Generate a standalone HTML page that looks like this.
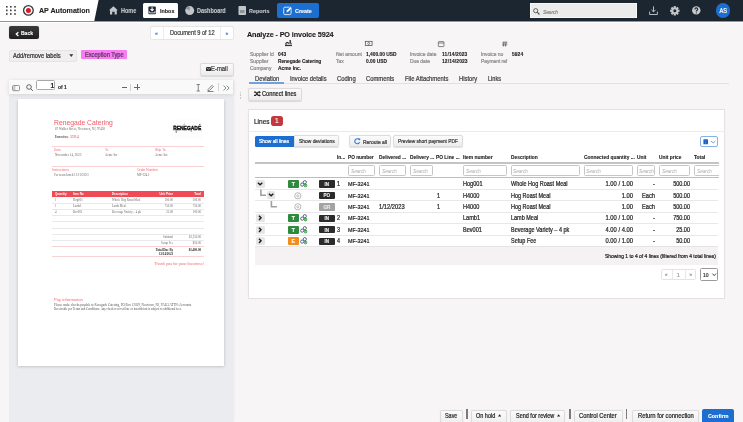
<!DOCTYPE html>
<html><head><meta charset="utf-8">
<style>
*{box-sizing:border-box;margin:0;padding:0}
html,body{width:743px;height:422px;overflow:hidden;background:#f7f5f6;font-family:"Liberation Sans",sans-serif;color:#262626}
.a{position:absolute}
.t{position:absolute;white-space:nowrap;line-height:10px;height:10px;will-change:transform;-webkit-text-stroke-width:0.2px;transform:scaleY(1.15);transform-origin:0 7px}
.t.b{-webkit-text-stroke-width:0.1px}
.t.p{-webkit-text-stroke-width:0}
.t.n,.t.p{transform:none}
.b{font-weight:bold}
svg{position:absolute;overflow:visible}
.btn{position:absolute;background:linear-gradient(#fbfbfb,#ececec);border:1px solid #dcdcdc;border-radius:2px;box-shadow:0 0.5px 1px rgba(0,0,0,.12)}
.inp{position:absolute;border:1px solid #c6c6c6;background:#fff;border-radius:1.5px}
.inp span{position:absolute;will-change:transform;white-space:nowrap;left:1.8px;top:1.2px;line-height:8px;font-size:5px;letter-spacing:-0.2px;font-style:italic;color:#b0b0b0}
</style></head><body>

<!-- HEADER -->
<div class="a" style="left:0;top:0;width:743px;height:21px;background:#1c2631"></div>
<svg style="left:0;top:0" width="100" height="21"><polygon points="0,0 98.6,0 94.3,21 0,21" fill="#fff"/></svg>
<div class="a" style="left:0;top:21px;width:743px;height:1px;background:#8f959b"></div>
<div class="a" style="left:0;top:22px;width:743px;height:1px;background:#fff"></div>

<!-- grid icon -->
<svg style="left:0;top:0" width="20" height="20">
<g fill="#3a3a3a">
<rect x="6" y="6" width="1.6" height="1.6"/><rect x="10" y="6" width="1.6" height="1.6"/><rect x="14.2" y="6" width="1.6" height="1.6"/>
<rect x="6" y="9.6" width="1.6" height="1.6"/><rect x="10" y="9.6" width="1.6" height="1.6"/><rect x="14.2" y="9.6" width="1.6" height="1.6"/>
<rect x="6" y="13.2" width="1.6" height="1.6"/><rect x="10" y="13.2" width="1.6" height="1.6"/><rect x="14.2" y="13.2" width="1.6" height="1.6"/>
</g></svg>
<svg style="left:0;top:0" width="40" height="20"><circle cx="28.4" cy="10.4" r="4.8" fill="none" stroke="#2c3540" stroke-width="1.3"/><circle cx="28.4" cy="10.4" r="2.5" fill="#e3161b"/></svg>
<div class="t n b" style="left:39px;top:5.5px;font-size:7.1px;color:#222">AP Automation</div>

<!-- nav -->
<svg style="left:109px;top:6px" width="10" height="9"><path d="M4.4,0.2 L8.8,4.2 L7.8,4.2 L7.8,8.6 L5.6,8.6 L5.6,5.8 L3.2,5.8 L3.2,8.6 L1,8.6 L1,4.2 L0,4.2 Z" fill="#c3c6c9"/></svg>
<div class="t b" style="left:120.7px;top:5.5px;font-size:5.5px;color:#c5c8cb">Home</div>

<div class="a" style="left:143px;top:3px;width:35px;height:15px;background:#fff;border-radius:1.5px"></div>
<svg style="left:148px;top:6px" width="9" height="9"><rect x="0.4" y="0.4" width="7.4" height="7.8" fill="#1e2630" rx="0.6"/><path d="M4.1,1.2 V4.6 M2.5,3.2 L4.1,4.8 L5.7,3.2" stroke="#fff" stroke-width="1.1" fill="none"/><path d="M1.3,5.2 V6.9 H6.9 V5.2" stroke="#fff" stroke-width="0.8" fill="none"/></svg>
<div class="t b" style="left:159.7px;top:5.5px;font-size:5.4px;color:#262626">Inbox</div>

<svg style="left:185px;top:6px" width="10" height="10"><circle cx="4.7" cy="4.6" r="4.5" fill="#c3c6c9"/><path d="M4.7,4.6 L4.7,0.2 A4.4,4.4 0 0 0 0.8,2.5 Z" fill="#8d9297"/></svg>
<div class="t b" style="left:197px;top:5.5px;font-size:5.5px;color:#c5c8cb">Dashboard</div>

<svg style="left:238px;top:6px" width="9" height="10"><rect x="0.5" y="0" width="7.5" height="9" rx="0.8" fill="#c3c6c9"/><rect x="2" y="4" width="4.5" height="3" fill="#8d9297"/></svg>
<div class="t b" style="left:249px;top:5.5px;font-size:5.42px;color:#c5c8cb">Reports</div>

<div class="a" style="left:277px;top:3.4px;width:42.2px;height:14.2px;background:#1c6fd1;border-radius:2px"></div>
<svg style="left:283px;top:6px" width="10" height="10"><rect x="0.7" y="1.2" width="7.4" height="7.4" rx="1.2" fill="none" stroke="#e8f0fb" stroke-width="0.9"/><path d="M3.2,6.4 L3.5,4.6 L7.4,0.7 L9,2.3 L5.1,6.2 Z" fill="#fff" stroke="#1c6fd1" stroke-width="0.6"/></svg>
<div class="t b" style="left:294.7px;top:5.5px;font-size:5.43px;color:#fff">Create</div>

<div class="a" style="left:530px;top:3px;width:107px;height:14.5px;background:#ebebeb;border:1px solid #f8f8f8"></div>
<svg style="left:533px;top:7.5px" width="8" height="8"><circle cx="2.7" cy="2.7" r="2.1" fill="none" stroke="#555" stroke-width="0.9"/><path d="M4.2,4.2 L6.5,6.5" stroke="#555" stroke-width="1.1"/></svg>
<div class="t" style="left:543.4px;top:6.5px;font-size:5px;letter-spacing:-0.15px;font-style:italic;color:#8c8c8c">Search</div>

<svg style="left:649px;top:6px" width="10" height="10"><path d="M4.5,0.3 V5.8 M2.4,3.8 L4.5,5.9 L6.6,3.8" stroke="#b9bdc2" stroke-width="1" fill="none"/><path d="M0.6,5.6 V8.5 H8.4 V5.6" stroke="#b9bdc2" stroke-width="1" fill="none"/></svg>
<svg style="left:669.5px;top:5.8px" width="11" height="11"><g transform="translate(4.8,4.8)" fill="#c2c6ca"><circle r="3.4"/><rect x="-1.1" y="-4.7" width="2.2" height="9.4"/><rect x="-4.7" y="-1.1" width="9.4" height="2.2"/><rect x="-1.1" y="-4.7" width="2.2" height="9.4" transform="rotate(45)"/><rect x="-1.1" y="-4.7" width="2.2" height="9.4" transform="rotate(-45)"/></g><circle cx="4.8" cy="4.8" r="1.5" fill="#1c2631"/></svg>
<svg style="left:691.5px;top:6px;will-change:transform" width="10" height="10"><circle cx="4.3" cy="4.4" r="4.2" fill="#c8cbce"/><path d="M2.9,3.4 Q2.9,1.9 4.3,1.9 Q5.7,1.9 5.7,3.2 Q5.7,4 4.8,4.4 Q4.3,4.7 4.3,5.4" stroke="#1c2631" stroke-width="1.1" fill="none"/><circle cx="4.3" cy="6.8" r="0.65" fill="#1c2631"/></svg>
<div class="a" style="left:716px;top:3.4px;width:14.4px;height:14.4px;border-radius:50%;background:#1c6fd1"></div>
<div class="t" style="left:716px;top:5.6px;width:14.4px;text-align:center;font-size:5.6px;color:#fff">AS</div>

<!-- LEFT PANE -->
<div class="a" style="left:9px;top:26px;width:30px;height:13px;background:linear-gradient(#3a3a3a,#1f1f1f);border-radius:2px;box-shadow:0 0 1px rgba(0,0,0,.3)"></div>
<svg style="left:15px;top:31px" width="5" height="6"><path d="M3.4,1.3 L1.3,3.1 L3.4,4.9" stroke="#fff" stroke-width="1.3" fill="none"/></svg>
<div class="t b" style="left:21px;top:27.5px;font-size:5px;color:#fff">Back</div>


<!-- pager -->
<div class="a" style="left:150.4px;top:26.4px;width:83.8px;height:13.2px;background:#fff;border:1px solid #e6e6e6;border-radius:2px"></div>
<div class="a" style="left:163px;top:27px;width:1px;height:12px;background:#ececec"></div>
<div class="a" style="left:220.3px;top:27px;width:1px;height:12px;background:#ececec"></div>
<div class="t" style="left:150.4px;top:27.5px;width:13px;text-align:center;font-size:5px;color:#3b7ddb">&laquo;</div>
<div class="t" style="left:169.8px;top:28px;font-size:5.65px;color:#3d3d3d">Document 9 of 12</div>
<div class="t" style="left:220.3px;top:27.5px;width:13.7px;text-align:center;font-size:5px;color:#3b7ddb">&raquo;</div>

<!-- labels dropdown -->
<div class="a" style="left:9px;top:49.5px;width:68.3px;height:12.5px;background:#f0eeee;border:1px solid #e6e4e4;border-radius:2px"></div>
<div class="t" style="left:12.9px;top:50.8px;font-size:5.78px;color:#333">Add/remove labels</div>
<svg style="left:69px;top:54px" width="5" height="4"><path d="M0.3,0.3 H4.3 L2.3,2.9 Z" fill="#333"/></svg>
<div class="a" style="left:81px;top:50px;width:46px;height:8.7px;background:#f77df2;border-radius:1px"></div>
<div class="t" style="left:84.7px;top:50.1px;font-size:5.67px;color:#5a355a">Exception Type</div>

<!-- email -->
<div class="btn" style="left:200.2px;top:62.5px;width:33.9px;height:13px"></div>
<svg style="left:206px;top:67px" width="6" height="5"><rect x="0" y="0" width="5" height="4" fill="#333"/><path d="M0.3,0.5 L2.5,2.3 L4.7,0.5" stroke="#fff" stroke-width="0.5" fill="none"/></svg>
<div class="t" style="left:211.3px;top:64px;font-size:5.9px;color:#3d3d3d">E-mail</div>

<!-- pdf viewer -->
<div class="a" style="left:9px;top:80px;width:224.4px;height:342px;background:#ebecf0;box-shadow:0.5px 0 2px rgba(0,0,0,.06)"></div>
<div class="a" style="left:9px;top:80px;width:224.4px;height:14px;background:#f9f9fa;box-shadow:0 1px 4px rgba(0,0,0,.1)"></div>
<svg style="left:12px;top:84.5px" width="9" height="7"><rect x="0.5" y="0.5" width="7" height="5.2" rx="1" fill="none" stroke="#777" stroke-width="0.8"/><path d="M2.8,0.5 V5.7 M1,2 H2.5 M1,3.2 H2.5 M1,4.4 H2.5" stroke="#888" stroke-width="0.5"/></svg>
<svg style="left:25.5px;top:84px" width="8" height="8"><circle cx="3" cy="3" r="2.3" fill="none" stroke="#555" stroke-width="0.9"/><path d="M4.7,4.7 L6.8,6.8" stroke="#555" stroke-width="1"/></svg>
<div class="a" style="left:36.2px;top:80.2px;width:19.3px;height:9.6px;background:#fff;border:1px solid #a8a8a8;border-radius:1.5px"></div>
<div class="t b" style="left:36px;top:80.6px;width:18px;text-align:right;font-size:6.5px;color:#222">1</div>
<div class="t b" style="left:57.9px;top:82.2px;font-size:5px;color:#262626">of 1</div>
<div class="a" style="left:121.5px;top:87px;width:5.5px;height:0.9px;background:#666"></div>
<div class="a" style="left:130.3px;top:83.5px;width:0.8px;height:7.5px;background:#cfcfcf"></div>
<div class="a" style="left:134.2px;top:87px;width:5.6px;height:0.9px;background:#666"></div>
<div class="a" style="left:136.55px;top:84.3px;width:0.9px;height:5.6px;background:#666"></div>
<svg style="left:195.5px;top:83.5px" width="5" height="8"><path d="M0.6,0.5 H3.9 M0.6,7 H3.9 M2.25,0.5 V7" stroke="#666" stroke-width="0.8"/></svg>
<svg style="left:206.5px;top:83.5px" width="8" height="8"><path d="M1,5.5 L5,1.3 L6.3,2.6 L2.3,6.6 L1,6.6 Z" fill="none" stroke="#666" stroke-width="0.8"/><path d="M0.5,7.5 H6.5" stroke="#666" stroke-width="0.8"/></svg>
<div class="a" style="left:218.4px;top:82.5px;width:0.8px;height:8.5px;background:#d4d4d4"></div>
<svg style="left:222.5px;top:84.5px" width="8" height="6"><path d="M0.5,0.5 L3,3 L0.5,5.5 M3.6,0.5 L6.1,3 L3.6,5.5" stroke="#666" stroke-width="0.75" fill="none"/></svg>

<div class="a" id="page" style="left:18px;top:99px;width:206.2px;height:266.8px;background:#fff;box-shadow:0 0.8px 3px rgba(0,0,0,.22)"></div>


<!-- RIGHT: title & info -->
<div class="t n b" style="left:247.3px;top:29.5px;font-size:7.25px;color:#1a1a1a;letter-spacing:-0.12px">Analyze - PO invoice 5924</div>
<svg style="left:285px;top:40px" width="8" height="7"><circle cx="5.2" cy="1" r="0.9" fill="#333"/><path d="M0.6,3.2 L2.4,2.4 L3.8,3.4 L5.4,2.4 L6.4,4.2" stroke="#333" stroke-width="1.1" fill="none"/><rect x="0" y="4.8" width="7" height="1.3" fill="#333"/><rect x="0.4" y="3" width="1.2" height="2" fill="#555"/></svg>
<svg style="left:365px;top:40.8px" width="8" height="5"><rect x="0.3" y="0.3" width="6.8" height="4.3" fill="none" stroke="#444" stroke-width="0.7"/><circle cx="3.7" cy="2.45" r="1" fill="none" stroke="#444" stroke-width="0.6"/></svg>
<svg style="left:438px;top:40.5px" width="7" height="6"><rect x="0.35" y="0.6" width="5.6" height="5" rx="0.6" fill="none" stroke="#555" stroke-width="0.7"/><path d="M0.4,2 H6" stroke="#555" stroke-width="0.7"/></svg>
<svg style="left:501.5px;top:40.5px" width="6" height="6"><path d="M2,0.2 L1.4,5.5 M4.1,0.2 L3.5,5.5 M0.2,1.9 H5.4 M0,3.9 H5.2" stroke="#555" stroke-width="0.75" fill="none"/></svg>

<div class="t" style="left:250px;top:48.9px;font-size:5px;color:#8a8a8a">Supplier Id</div>
<div class="t" style="left:250px;top:55.9px;font-size:5px;color:#8a8a8a">Supplier</div>
<div class="t" style="left:250px;top:63px;font-size:5px;color:#8a8a8a">Company</div>
<div class="t b" style="left:278.4px;top:49.8px;font-size:4.89px;color:#222">043</div>
<div class="t b" style="left:278.4px;top:56.8px;font-size:4.89px;letter-spacing:-0.07px;color:#222">Renegade Catering</div>
<div class="t b" style="left:278.4px;top:63.9px;font-size:4.89px;color:#222">Acme Inc.</div>

<div class="t" style="left:335.7px;top:48.9px;font-size:5px;color:#8a8a8a">Net amount</div>
<div class="t" style="left:335.7px;top:55.9px;font-size:5px;color:#8a8a8a">Tax</div>
<div class="t b" style="left:366.3px;top:49.8px;font-size:4.89px;color:#222">1,400.00 USD</div>
<div class="t b" style="left:366.3px;top:56.8px;font-size:4.89px;color:#222">0.00 USD</div>

<div class="t" style="left:410.4px;top:48.9px;font-size:5px;letter-spacing:-0.05px;color:#8a8a8a">Invoice date</div>
<div class="t" style="left:410.4px;top:55.9px;font-size:5px;letter-spacing:-0.05px;color:#8a8a8a">Due date</div>
<div class="t b" style="left:441.5px;top:49.8px;font-size:4.89px;letter-spacing:0.13px;color:#222">11/14/2023</div>
<div class="t b" style="left:441.5px;top:56.8px;font-size:4.89px;letter-spacing:0.13px;color:#222">12/14/2023</div>

<div class="t" style="left:481px;top:48.9px;font-size:5px;letter-spacing:-0.07px;color:#8a8a8a">Invoice no</div>
<div class="t" style="left:481px;top:55.9px;font-size:5px;letter-spacing:-0.07px;color:#8a8a8a">Payment ref</div>
<div class="t b" style="left:511.8px;top:49.8px;font-size:4.89px;letter-spacing:0.1px;color:#222">5924</div>

<!-- tabs -->
<div class="a" style="left:249px;top:83px;width:479.6px;height:1px;background:#e2e0e0"></div>
<div class="a" style="left:249px;top:82px;width:34.8px;height:1.5px;background:#6ea3df"></div>
<div class="t" style="left:254.7px;top:73.5px;font-size:5.83px;color:#404040">Deviation</div>
<div class="t" style="left:289.8px;top:73.5px;font-size:5.77px;color:#404040">Invoice details</div>
<div class="t" style="left:336.9px;top:73.5px;font-size:5.9px;color:#404040">Coding</div>
<div class="t" style="left:365.7px;top:73.5px;font-size:5.85px;color:#404040">Comments</div>
<div class="t" style="left:404.7px;top:73.5px;font-size:5.86px;color:#404040">File Attachments</div>
<div class="t" style="left:458.6px;top:73.5px;font-size:5.85px;color:#404040">History</div>
<div class="t" style="left:488px;top:73.5px;font-size:5.57px;color:#404040">Links</div>

<!-- connect lines -->
<div class="btn" style="left:247.5px;top:87.6px;width:54.5px;height:13px"></div>
<svg style="left:253.5px;top:90.8px" width="8" height="7"><path d="M0,1.2 H1.6 L4.2,4.4 H5.6 M0,4.4 H1.6 L4.2,1.2 H5.6" stroke="#2a2a2a" stroke-width="1.2" fill="none"/><path d="M5,0 L7,1.2 L5,2.4 Z M5,3.2 L7,4.4 L5,5.6 Z" fill="#2a2a2a"/></svg>
<div class="t" style="left:261.6px;top:89px;font-size:5.7px;color:#262626">Connect lines</div>

<!-- card -->
<div class="a" style="left:247.5px;top:109px;width:477.7px;height:190.2px;background:#fff;border:1px solid #e4e2e2;box-shadow:0 0 1px rgba(0,0,0,.06)"></div>
<div class="a" style="left:248px;top:131px;width:477px;height:1px;background:#ebebeb"></div>
<div class="t n" style="left:254px;top:117.1px;font-size:6.5px;color:#262626">Lines</div>
<div class="a" style="left:271.3px;top:115.6px;width:11.5px;height:10.5px;background:#c2383e;border-radius:2.8px"></div>
<div class="t" style="left:271.3px;top:116.4px;width:11.5px;text-align:center;font-size:6.6px;color:#f4e4e4">1</div>

<div class="a" style="left:254.6px;top:135.5px;width:39.6px;height:11.2px;background:#1c6fd1;border-radius:1.5px 0 0 1.5px"></div>
<div class="t" style="left:258.9px;top:137px;font-size:4.92px;color:#fff">Show all lines</div>
<div class="btn" style="left:294.2px;top:135.4px;width:44.5px;height:11.2px;border-radius:0 1.5px 1.5px 0"></div>
<div class="t" style="left:298.7px;top:136.5px;font-size:4.92px;color:#3a3a3a">Show deviations</div>
<div class="btn" style="left:349.3px;top:135.4px;width:41.5px;height:11.2px"></div>
<svg style="left:354px;top:137.5px" width="7" height="7"><path d="M5.2,1.6 A2.5,2.5 0 1 0 5.6,4.2" stroke="#2f7be0" stroke-width="1.1" fill="none"/><path d="M4,0.2 L6.3,0.4 L6,2.7 Z" fill="#2f7be0"/></svg>
<div class="t" style="left:362.6px;top:136.5px;font-size:4.98px;color:#3a3a3a">Reroute all</div>
<div class="btn" style="left:393px;top:135.4px;width:70px;height:11.2px"></div>
<div class="t" style="left:398px;top:136.5px;font-size:4.82px;color:#3a3a3a">Preview short payment PDF</div>

<div class="a" style="left:700.3px;top:136px;width:18.2px;height:10.9px;background:#fff;border:1px solid #86b1e6;border-radius:2px"></div>
<svg style="left:703px;top:138.8px" width="14" height="7"><rect x="0.4" y="0.3" width="4.6" height="5" rx="0.6" fill="#1a5fc4"/><path d="M2.7,0.4 V5.2" stroke="#6a9de0" stroke-width="0.5"/><path d="M8,2 L10.2,3.8 L12.4,2" stroke="#4a8ad8" stroke-width="0.8" fill="none"/></svg>


<div class="a" style="left:240px;top:92.3px;width:0.8px;height:6.7px;background:repeating-linear-gradient(#c8c8c8 0 1px,transparent 1px 1.6px)"></div>
<!-- table header -->
<div class="t b" style="left:336.9px;top:152.6px;font-size:4.85px;color:#222">In...</div>
<div class="t b" style="left:348.3px;top:152.6px;font-size:4.77px;color:#222">PO number</div>
<div class="t b" style="left:379.2px;top:152.6px;font-size:4.85px;color:#222">Delivered ...</div>
<div class="t b" style="left:410px;top:152.6px;font-size:4.85px;color:#222">Delivery ...</div>
<div class="t b" style="left:436.4px;top:152.6px;font-size:4.85px;color:#222">PO Line ...</div>
<div class="t b" style="left:463.2px;top:152.6px;font-size:4.97px;color:#222">Item number</div>
<div class="t b" style="left:511px;top:152.6px;font-size:4.85px;color:#222">Description</div>
<div class="t b" style="left:583.8px;top:152.6px;font-size:4.86px;color:#222">Connected quantity ...</div>
<div class="t b" style="left:636.5px;top:152.6px;font-size:4.85px;color:#222">Unit</div>
<div class="t b" style="left:658.8px;top:152.6px;font-size:4.86px;color:#222">Unit price</div>
<div class="t b" style="left:694px;top:152.6px;font-size:4.85px;color:#222">Total</div>
<div class="a" style="left:254.5px;top:162px;width:464px;height:2px;background:#c4c4c4"></div>
<div class="a" style="left:254.5px;top:176.9px;width:464px;height:1.3px;background:#bdbdbd"></div>
<div class="a" style="left:254.5px;top:163px;width:464px;height:15px;overflow:hidden">
<div class="inp" style="left:93.8px;top:2px;width:27.0px;height:11px"><span>Search</span></div>
<div class="inp" style="left:124.7px;top:2px;width:27.0px;height:11px"><span>Search</span></div>
<div class="inp" style="left:155.5px;top:2px;width:22.5px;height:11px"><span>Search</span></div>
<div class="inp" style="left:208.7px;top:2px;width:44.3px;height:11px"><span>Search</span></div>
<div class="inp" style="left:256.2px;top:2px;width:69.3px;height:11px"><span>Search</span></div>
<div class="inp" style="left:329.1px;top:2px;width:49.5px;height:11px"><span>Search</span></div>
<div class="inp" style="left:382.0px;top:2px;width:18.5px;height:11px"><span>Search</span></div>
<div class="inp" style="left:404.3px;top:2px;width:31.4px;height:11px"><span>Search</span></div>
<div class="inp" style="left:439.5px;top:2px;width:28.0px;height:11px"><span>Search</span></div>
</div>
<div class="a" style="left:254.5px;top:188.8px;width:463.6px;height:1px;background:#e8e8e8"></div>
<div class="a" style="left:254.5px;top:200.2px;width:463.6px;height:1px;background:#e8e8e8"></div>
<div class="a" style="left:254.5px;top:211.7px;width:463.6px;height:1px;background:#e8e8e8"></div>
<div class="a" style="left:254.5px;top:223.1px;width:463.6px;height:1px;background:#e8e8e8"></div>
<div class="a" style="left:254.5px;top:234.5px;width:463.6px;height:1px;background:#e8e8e8"></div>
<div class="a" style="left:254.5px;top:245.6px;width:463.6px;height:19px;background:#f4f2f2"></div>
<div class="a" style="left:254.5px;top:245.6px;width:463.6px;height:1px;background:#e4e4e4"></div>
<div class="t" style="left:337.3px;top:179.0px;font-size:5.5px;color:#262626;">1</div>
<div class="t" style="left:347.8px;top:179.0px;font-size:5.4px;color:#262626;">MF-3241</div>
<div class="t" style="left:462.7px;top:179.0px;font-size:5.57px;color:#262626;">Hog001</div>
<div class="t" style="left:511px;top:179.0px;font-size:5.5px;color:#262626;">Whole Hog Roast Meal</div>
<div class="t" style="left:573.3px;width:60px;text-align:right;top:179.0px;font-size:5.84px;color:#262626">1.00 / 1.00</div>
<div class="t" style="left:652.6px;top:179.0px;font-size:5.5px;color:#262626;">-</div>
<div class="t" style="left:630.1px;width:60px;text-align:right;top:179.0px;font-size:5.52px;color:#262626">500.00</div>
<div class="a" style="left:319.3px;top:180.3px;width:15.7px;height:7.4px;background:#2b2b2b;border-radius:1px"></div>
<div class="t b" style="left:319.3px;width:15.7px;text-align:center;top:179.8px;font-size:4.6px;color:#eee">IN</div>
<div class="a" style="left:288.2px;top:180.1px;width:10.5px;height:7.7px;background:#2e8a3d;border-radius:1px"></div>
<div class="t b" style="left:288.2px;width:10.5px;text-align:center;top:179.0px;font-size:5.2px;color:#fff">T</div>
<svg style="left:300px;top:180.2px" width="8" height="8"><g fill="none" stroke="#4a5680" stroke-width="0.9"><circle cx="2.2" cy="4.6" r="1.6"/><circle cx="4.8" cy="2.2" r="1.6"/></g><circle cx="5.5" cy="5.6" r="1.8" fill="#3fa34d"/><path d="M4.6,5.6 L5.3,6.3 L6.5,5" stroke="#fff" stroke-width="0.6" fill="none"/></svg>
<div class="t" style="left:347.8px;top:190.5px;font-size:5.4px;color:#262626;">MF-3241</div>
<div class="t" style="left:436.6px;top:190.5px;font-size:5.5px;color:#262626;">1</div>
<div class="t" style="left:462.7px;top:190.5px;font-size:5.57px;color:#262626;">H4000</div>
<div class="t" style="left:511px;top:190.5px;font-size:5.5px;color:#262626;">Hog Roast Meal</div>
<div class="t" style="left:573.3px;width:60px;text-align:right;top:190.5px;font-size:5.84px;color:#262626">1.00</div>
<div class="t" style="left:594.9px;width:60px;text-align:right;top:190.5px;font-size:5.7px;color:#262626">Each</div>
<div class="t" style="left:630.1px;width:60px;text-align:right;top:190.5px;font-size:5.52px;color:#262626">500.00</div>
<div class="a" style="left:319.3px;top:191.8px;width:15.7px;height:7.4px;background:#2b2b2b;border-radius:1px"></div>
<div class="t b" style="left:319.3px;width:15.7px;text-align:center;top:191.3px;font-size:4.6px;color:#eee">PO</div>
<svg style="left:293.9px;top:191.7px" width="8" height="8"><circle cx="3.8" cy="3.8" r="3.1" fill="none" stroke="#9a9a9a" stroke-width="0.7"/><circle cx="3.8" cy="3.8" r="1.1" fill="none" stroke="#9a9a9a" stroke-width="0.6"/></svg>
<div class="t" style="left:347.8px;top:201.9px;font-size:5.4px;color:#262626;">MF-3241</div>
<div class="t" style="left:379.2px;top:201.9px;font-size:5.75px;color:#262626;">1/12/2023</div>
<div class="t" style="left:436.6px;top:201.9px;font-size:5.5px;color:#262626;">1</div>
<div class="t" style="left:462.7px;top:201.9px;font-size:5.57px;color:#262626;">H4000</div>
<div class="t" style="left:511px;top:201.9px;font-size:5.5px;color:#262626;">Hog Roast Meal</div>
<div class="t" style="left:573.3px;width:60px;text-align:right;top:201.9px;font-size:5.84px;color:#262626">1.00</div>
<div class="t" style="left:594.9px;width:60px;text-align:right;top:201.9px;font-size:5.7px;color:#262626">Each</div>
<div class="t" style="left:630.1px;width:60px;text-align:right;top:201.9px;font-size:5.52px;color:#262626">500.00</div>
<div class="a" style="left:319.3px;top:203.2px;width:15.7px;height:7.4px;background:#a3a3a3;border-radius:1px"></div>
<div class="t b" style="left:319.3px;width:15.7px;text-align:center;top:202.7px;font-size:4.6px;color:#eee">GR</div>
<svg style="left:293.9px;top:203.1px" width="8" height="8"><circle cx="3.8" cy="3.8" r="3.1" fill="none" stroke="#9a9a9a" stroke-width="0.7"/><circle cx="3.8" cy="3.8" r="1.1" fill="none" stroke="#9a9a9a" stroke-width="0.6"/></svg>
<div class="t" style="left:337.3px;top:213.2px;font-size:5.5px;color:#262626;">2</div>
<div class="t" style="left:347.8px;top:213.2px;font-size:5.4px;color:#262626;">MF-3241</div>
<div class="t" style="left:462.7px;top:213.2px;font-size:5.57px;color:#262626;">Lamb1</div>
<div class="t" style="left:511px;top:213.2px;font-size:5.5px;color:#262626;">Lamb Meal</div>
<div class="t" style="left:573.3px;width:60px;text-align:right;top:213.2px;font-size:5.84px;color:#262626">1.00 / 1.00</div>
<div class="t" style="left:652.6px;top:213.2px;font-size:5.5px;color:#262626;">-</div>
<div class="t" style="left:630.1px;width:60px;text-align:right;top:213.2px;font-size:5.52px;color:#262626">750.00</div>
<div class="a" style="left:319.3px;top:214.5px;width:15.7px;height:7.4px;background:#2b2b2b;border-radius:1px"></div>
<div class="t b" style="left:319.3px;width:15.7px;text-align:center;top:214.0px;font-size:4.6px;color:#eee">IN</div>
<div class="a" style="left:288.2px;top:214.3px;width:10.5px;height:7.7px;background:#2e8a3d;border-radius:1px"></div>
<div class="t b" style="left:288.2px;width:10.5px;text-align:center;top:213.2px;font-size:5.2px;color:#fff">T</div>
<svg style="left:300px;top:214.4px" width="8" height="8"><g fill="none" stroke="#4a5680" stroke-width="0.9"><circle cx="2.2" cy="4.6" r="1.6"/><circle cx="4.8" cy="2.2" r="1.6"/></g><circle cx="5.5" cy="5.6" r="1.8" fill="#3fa34d"/><path d="M4.6,5.6 L5.3,6.3 L6.5,5" stroke="#fff" stroke-width="0.6" fill="none"/></svg>
<div class="t" style="left:337.3px;top:224.8px;font-size:5.5px;color:#262626;">3</div>
<div class="t" style="left:347.8px;top:224.8px;font-size:5.4px;color:#262626;">MF-3241</div>
<div class="t" style="left:462.7px;top:224.8px;font-size:5.57px;color:#262626;">Bev001</div>
<div class="t" style="left:511px;top:224.8px;font-size:5.5px;color:#262626;">Beverage Variety &ndash; 4 pk</div>
<div class="t" style="left:573.3px;width:60px;text-align:right;top:224.8px;font-size:5.84px;color:#262626">4.00 / 4.00</div>
<div class="t" style="left:652.6px;top:224.8px;font-size:5.5px;color:#262626;">-</div>
<div class="t" style="left:630.1px;width:60px;text-align:right;top:224.8px;font-size:5.52px;color:#262626">25.00</div>
<div class="a" style="left:319.3px;top:226.1px;width:15.7px;height:7.4px;background:#2b2b2b;border-radius:1px"></div>
<div class="t b" style="left:319.3px;width:15.7px;text-align:center;top:225.6px;font-size:4.6px;color:#eee">IN</div>
<div class="a" style="left:288.2px;top:225.9px;width:10.5px;height:7.7px;background:#2e8a3d;border-radius:1px"></div>
<div class="t b" style="left:288.2px;width:10.5px;text-align:center;top:224.8px;font-size:5.2px;color:#fff">T</div>
<svg style="left:300px;top:226.0px" width="8" height="8"><g fill="none" stroke="#4a5680" stroke-width="0.9"><circle cx="2.2" cy="4.6" r="1.6"/><circle cx="4.8" cy="2.2" r="1.6"/></g><circle cx="5.5" cy="5.6" r="1.8" fill="#3fa34d"/><path d="M4.6,5.6 L5.3,6.3 L6.5,5" stroke="#fff" stroke-width="0.6" fill="none"/></svg>
<div class="t" style="left:337.3px;top:236.2px;font-size:5.5px;color:#262626;">4</div>
<div class="t" style="left:347.8px;top:236.2px;font-size:5.4px;color:#262626;">MF-3241</div>
<div class="t" style="left:511px;top:236.2px;font-size:5.5px;color:#262626;">Setup Fee</div>
<div class="t" style="left:573.3px;width:60px;text-align:right;top:236.2px;font-size:5.84px;color:#262626">0.00 / 1.00</div>
<div class="t" style="left:652.6px;top:236.2px;font-size:5.5px;color:#262626;">-</div>
<div class="t" style="left:630.1px;width:60px;text-align:right;top:236.2px;font-size:5.52px;color:#262626">50.00</div>
<div class="a" style="left:319.3px;top:237.5px;width:15.7px;height:7.4px;background:#2b2b2b;border-radius:1px"></div>
<div class="t b" style="left:319.3px;width:15.7px;text-align:center;top:237.0px;font-size:4.6px;color:#eee">IN</div>
<div class="a" style="left:288.2px;top:237.3px;width:10.5px;height:7.7px;background:#f28c1a;border-radius:1px"></div>
<div class="t b" style="left:288.2px;width:10.5px;text-align:center;top:236.2px;font-size:5.2px;color:#fff">E</div>
<svg style="left:300px;top:237.4px" width="8" height="8"><g fill="none" stroke="#4a5680" stroke-width="0.9"><circle cx="2.2" cy="4.6" r="1.6"/><circle cx="4.8" cy="2.2" r="1.6"/></g><circle cx="5.5" cy="5.6" r="1.8" fill="#3fa34d"/><path d="M4.6,5.6 L5.3,6.3 L6.5,5" stroke="#fff" stroke-width="0.6" fill="none"/></svg>
<div class="a" style="left:256.3px;top:180.0px;width:8.4px;height:7.9px;background:#e6e6e6;border-radius:1.5px"></div><svg style="left:256.3px;top:180.0px" width="9" height="8"><path d="M1.9,2.8 L4.1,4.8 L6.3,2.8" stroke="#1a1a1a" stroke-width="1.4" fill="none"/></svg>
<div class="a" style="left:267.2px;top:191.3px;width:7.8px;height:7.7px;background:#e6e6e6;border-radius:1.5px"></div><svg style="left:266.9px;top:191.3px" width="9" height="8"><path d="M1.9,2.8 L4.1,4.8 L6.3,2.8" stroke="#1a1a1a" stroke-width="1.4" fill="none"/></svg>
<div class="a" style="left:256.3px;top:214.2px;width:8.4px;height:7.9px;background:#e6e6e6;border-radius:1.5px"></div><svg style="left:256.3px;top:214.2px" width="9" height="8"><path d="M3,1.7 L5,3.8 L3,5.9" stroke="#1a1a1a" stroke-width="1.4" fill="none"/></svg>
<div class="a" style="left:256.3px;top:225.8px;width:8.4px;height:7.9px;background:#e6e6e6;border-radius:1.5px"></div><svg style="left:256.3px;top:225.8px" width="9" height="8"><path d="M3,1.7 L5,3.8 L3,5.9" stroke="#1a1a1a" stroke-width="1.4" fill="none"/></svg>
<div class="a" style="left:256.3px;top:237.2px;width:8.4px;height:7.9px;background:#e6e6e6;border-radius:1.5px"></div><svg style="left:256.3px;top:237.2px" width="9" height="8"><path d="M3,1.7 L5,3.8 L3,5.9" stroke="#1a1a1a" stroke-width="1.4" fill="none"/></svg>
<svg style="left:259px;top:189px" width="30" height="20"><path d="M1.9,0.6 V6.2 H7" stroke="#a0a0a0" stroke-width="1.6" fill="none"/><path d="M12.4,12.1 V17.7 H17.9" stroke="#a0a0a0" stroke-width="1.6" fill="none"/></svg>
<div class="t" style="left:605.3px;top:251.7px;font-size:4.94px;color:#222">Showing 1 to 4 of 4 lines (filtered from 4 total lines)</div>

<div class="a" style="left:661.3px;top:269px;width:35px;height:11.2px;background:#fff;border:1px solid #e3e3e3;border-radius:1.5px"></div>
<div class="a" style="left:672px;top:269.5px;width:1px;height:10.5px;background:#e8e8e8"></div>
<div class="a" style="left:684.6px;top:269.5px;width:1px;height:10.5px;background:#e8e8e8"></div>
<div class="t" style="left:661.3px;width:10.7px;text-align:center;top:269.6px;font-size:4.5px;color:#999">&laquo;</div>
<div class="t" style="left:672px;width:12.6px;text-align:center;top:269.6px;font-size:5px;color:#999">1</div>
<div class="t" style="left:684.6px;width:11.6px;text-align:center;top:269.6px;font-size:4.5px;color:#999">&raquo;</div>
<div class="a" style="left:700.3px;top:268.2px;width:18.1px;height:12.8px;background:#fff;border:1px solid #9a9a9a;border-radius:1.5px"></div>
<div class="t" style="left:702.8px;top:269.8px;font-size:5px;color:#333">10</div>
<svg style="left:712px;top:273px" width="5" height="4"><path d="M0.4,0.6 L2.2,2.6 L4,0.6" stroke="#333" stroke-width="0.9" fill="none"/></svg>


<!-- bottom bar -->
<div class="btn" style="left:439.9px;top:409.7px;width:23px;height:16px"></div>
<div class="t" style="left:444.6px;top:410.7px;font-size:5.5px;letter-spacing:-0.05px;color:#333">Save</div>
<div class="a" style="left:466px;top:409px;width:1.6px;height:10.4px;background:#7a7a7a"></div>
<div class="btn" style="left:470.9px;top:409.7px;width:36px;height:16px"></div>
<div class="t" style="left:476.2px;top:410.7px;font-size:5.5px;color:#262626">On hold</div>
<svg style="left:498.3px;top:413.6px" width="4" height="3"><path d="M0,2.5 L1.6,0.3 L3.2,2.5 Z" fill="#222"/></svg>
<div class="btn" style="left:510.1px;top:409.7px;width:55.1px;height:16px"></div>
<div class="t" style="left:515.5px;top:410.7px;font-size:5.5px;color:#262626">Send for review</div>
<svg style="left:556.8px;top:413.6px" width="4" height="3"><path d="M0,2.5 L1.6,0.3 L3.2,2.5 Z" fill="#222"/></svg>
<div class="a" style="left:569px;top:409px;width:1.6px;height:10.4px;background:#7a7a7a"></div>
<div class="btn" style="left:573.5px;top:409.7px;width:49px;height:16px"></div>
<div class="t" style="left:578.8px;top:410.7px;font-size:5.8px;color:#262626">Control Center</div>
<div class="a" style="left:625.5px;top:409px;width:1.6px;height:10.4px;background:#7a7a7a"></div>
<div class="btn" style="left:632.4px;top:409.7px;width:66.8px;height:16px"></div>
<div class="t" style="left:638px;top:410.7px;font-size:5.85px;color:#262626">Return for connection</div>
<div class="a" style="left:702.2px;top:409.3px;width:32px;height:16px;background:#1c6fd1;border-radius:2px"></div>
<div class="t b" style="left:707.8px;top:410.7px;font-size:5.35px;color:#fff">Confirm</div>

<!-- PDF content -->
<div class="t p" style="left:54.4px;top:117.60px;font-family:'Liberation Sans';font-size:6.77px;color:#f25a64;">Renegade Catering</div>
<div class="t p" style="left:54.6px;top:123.90px;font-family:'Liberation Serif';font-size:3.2px;color:#6a6a6a;">67 Walker Street, Newtown, NJ, 97458</div>
<div class="t p" style="left:54.6px;top:131.80px;font-family:'Liberation Serif';font-size:5px;letter-spacing:-0.2px;color:#222;">Invoice</div>
<div class="t p" style="left:69.6px;top:131.80px;font-family:'Liberation Serif';font-size:4.6px;letter-spacing:-0.15px;color:#ef4a55;">5924</div>
<div class="a" style="left:171px;top:119px;width:31px;height:20px;background:#fdfdfd"></div>
<svg style="left:172px;top:120.5px;will-change:transform" width="32" height="14"><text x="1.2" y="8.8" font-family="Liberation Sans" font-weight="bold" font-size="5.2" textLength="28" lengthAdjust="spacingAndGlyphs" fill="#111" stroke="#111" stroke-width="0.35" transform="scale(1,1.2)" style="transform-origin:0 8.8px">RENEGADE</text><path d="M1.5,5.2 L3.5,4.6 M4,9.5 L4.3,11.8 M12,3.6 L12.4,2.8 M19,9.3 L19.2,10.6 M27,3.8 L28.5,3.2" stroke="#222" stroke-width="0.7"/></svg>
<div class="a" style="left:52px;top:145.5px;width:151.6px;height:0.7px;background:#f9d2d4"></div>
<div class="t p" style="left:54.4px;top:145.20px;font-family:'Liberation Sans';font-size:3.2px;color:#f26b73;">Date</div>
<div class="t p" style="left:54.6px;top:149.70px;font-family:'Liberation Serif';font-size:3.3px;color:#6a6a6a;">November 14, 2023</div>
<div class="t p" style="left:104.9px;top:145.20px;font-family:'Liberation Sans';font-size:3.2px;color:#f26b73;">To</div>
<div class="t p" style="left:104.9px;top:149.70px;font-family:'Liberation Serif';font-size:3.2px;color:#6a6a6a;">Acme Inc</div>
<div class="t p" style="left:155.4px;top:145.20px;font-family:'Liberation Sans';font-size:3.2px;color:#f26b73;">Ship To</div>
<div class="t p" style="left:155.4px;top:149.70px;font-family:'Liberation Serif';font-size:3.2px;color:#6a6a6a;">Acme Inc.</div>
<div class="a" style="left:52px;top:166.3px;width:151.6px;height:0.7px;background:#f9d2d4"></div>
<div class="t p" style="left:52px;top:165.40px;font-family:'Liberation Sans';font-size:3.3px;color:#f26b73;">Instructions</div>
<div class="t p" style="left:54.4px;top:170.00px;font-family:'Liberation Serif';font-size:3.2px;color:#6a6a6a;">For team lunch 11/10/2023</div>
<div class="t p" style="left:137.2px;top:165.20px;font-family:'Liberation Sans';font-size:3.3px;color:#f26b73;">Order Number</div>
<div class="t p" style="left:137.2px;top:170.00px;font-family:'Liberation Serif';font-size:3.2px;color:#6a6a6a;">MF-3241</div>
<div class="a" style="left:52.1px;top:190.8px;width:151.8px;height:6.2px;background:#ef4a55"></div>
<div class="t p" style="left:54.7px;top:189.00px;font-family:'Liberation Sans';font-size:2.9px;color:#fff;font-weight:bold">Quantity</div>
<div class="t p" style="left:73px;top:189.00px;font-family:'Liberation Sans';font-size:2.9px;color:#fff;font-weight:bold">Item No</div>
<div class="t p" style="left:111.5px;top:189.00px;font-family:'Liberation Sans';font-size:2.9px;color:#fff;font-weight:bold">Description</div>
<div class="t p" style="left:93px;width:80px;text-align:right;top:189.00px;font-family:'Liberation Sans';font-size:2.9px;color:#fff;font-weight:bold">Unit Price</div>
<div class="t p" style="left:121.19999999999999px;width:80px;text-align:right;top:189.00px;font-family:'Liberation Sans';font-size:2.9px;color:#fff;font-weight:bold">Total</div>
<div class="t p" style="left:54.8px;top:195.00px;font-family:'Liberation Serif';font-size:3px;color:#6a6a6a;">1</div>
<div class="t p" style="left:73px;top:195.00px;font-family:'Liberation Serif';font-size:3px;color:#6a6a6a;">Hog001</div>
<div class="t p" style="left:111.5px;top:195.00px;font-family:'Liberation Serif';font-size:3px;color:#6a6a6a;">Whole Hog Roast Meal</div>
<div class="t p" style="left:93px;width:80px;text-align:right;top:195.00px;font-family:'Liberation Serif';font-size:3px;color:#6a6a6a;">500.00</div>
<div class="t p" style="left:121.19999999999999px;width:80px;text-align:right;top:195.00px;font-family:'Liberation Serif';font-size:3px;color:#6a6a6a;">500.00</div>
<div class="t p" style="left:54.8px;top:201.10px;font-family:'Liberation Serif';font-size:3px;color:#6a6a6a;">1</div>
<div class="t p" style="left:73px;top:201.10px;font-family:'Liberation Serif';font-size:3px;color:#6a6a6a;">Lamb1</div>
<div class="t p" style="left:111.5px;top:201.10px;font-family:'Liberation Serif';font-size:3px;color:#6a6a6a;">Lamb Meal</div>
<div class="t p" style="left:93px;width:80px;text-align:right;top:201.10px;font-family:'Liberation Serif';font-size:3px;color:#6a6a6a;">750.00</div>
<div class="t p" style="left:121.19999999999999px;width:80px;text-align:right;top:201.10px;font-family:'Liberation Serif';font-size:3px;color:#6a6a6a;">750.00</div>
<div class="t p" style="left:54.8px;top:207.20px;font-family:'Liberation Serif';font-size:3px;color:#6a6a6a;">4</div>
<div class="t p" style="left:73px;top:207.20px;font-family:'Liberation Serif';font-size:3px;color:#6a6a6a;">Bev001</div>
<div class="t p" style="left:111.5px;top:207.20px;font-family:'Liberation Serif';font-size:3px;color:#6a6a6a;">Beverage Variety &ndash; 4 pk</div>
<div class="t p" style="left:93px;width:80px;text-align:right;top:207.20px;font-family:'Liberation Serif';font-size:3px;color:#6a6a6a;">25.00</div>
<div class="t p" style="left:121.19999999999999px;width:80px;text-align:right;top:207.20px;font-family:'Liberation Serif';font-size:3px;color:#6a6a6a;">100.00</div>
<div class="a" style="left:52px;top:202.9px;width:151.6px;height:0.6px;background:#e9e9e9"></div>
<div class="a" style="left:52px;top:209.1px;width:151.6px;height:0.6px;background:#e9e9e9"></div>
<div class="a" style="left:52px;top:215.3px;width:151.6px;height:0.6px;background:#e9e9e9"></div>
<div class="a" style="left:52px;top:221.4px;width:151.6px;height:0.6px;background:#e9e9e9"></div>
<div class="a" style="left:52px;top:227.7px;width:151.6px;height:0.6px;background:#e9e9e9"></div>
<div class="a" style="left:52px;top:234.3px;width:151.6px;height:0.6px;background:#e9e9e9"></div>
<div class="a" style="left:52px;top:240.4px;width:151.6px;height:0.6px;background:#e9e9e9"></div>
<div class="t p" style="left:93px;width:80px;text-align:right;top:232.20px;font-family:'Liberation Serif';font-size:3px;color:#6a6a6a;">Subtotal</div>
<div class="t p" style="left:121.19999999999999px;width:80px;text-align:right;top:232.20px;font-family:'Liberation Serif';font-size:3px;color:#6a6a6a;">$1,350.00</div>
<div class="t p" style="left:93px;width:80px;text-align:right;top:238.40px;font-family:'Liberation Serif';font-size:3px;color:#6a6a6a;">Setup Fee</div>
<div class="t p" style="left:121.19999999999999px;width:80px;text-align:right;top:238.40px;font-family:'Liberation Serif';font-size:3px;color:#6a6a6a;">$50.00</div>
<div class="a" style="left:52px;top:246.4px;width:151.6px;height:0.6px;background:#f9d2d4"></div>
<div class="t p" style="left:93px;width:80px;text-align:right;top:245px;font-family:'Liberation Serif';font-size:3.1px;color:#222;font-weight:bold">Total Due By</div>
<div class="t p" style="left:93px;width:80px;text-align:right;top:249px;font-family:'Liberation Serif';font-size:3.1px;color:#222;font-weight:bold">12/14/2023</div>
<div class="t p" style="left:121.19999999999999px;width:80px;text-align:right;top:244.60px;font-family:'Liberation Serif';font-size:3.1px;color:#222;font-weight:bold">$1,400.00</div>
<div class="a" style="left:52px;top:256.4px;width:151.6px;height:0.6px;background:#f9d2d4"></div>
<div class="t p" style="left:123.80000000000001px;width:80px;text-align:right;top:259px;font-family:'Liberation Sans';font-size:3.9px;color:#f26b73;">Thank you for your business!</div>
<div class="t p" style="left:53.9px;top:295.3px;font-family:'Liberation Sans';font-size:4.16px;color:#f26b73;">Pay information</div>
<div class="t p" style="left:53.9px;top:300.2px;font-family:'Liberation Serif';font-size:3.23px;color:#555;">Please make checks payable to Renegade Catering, PO Box 12039, Newtown, NJ, 97453 ATTN: Accounts</div>
<div class="t p" style="left:53.9px;top:303.9px;font-family:'Liberation Serif';font-size:3.02px;color:#555;">Receivable per Terms and Conditions. Any check received late or insufficient is subject to additional fees.</div>

</body></html>
